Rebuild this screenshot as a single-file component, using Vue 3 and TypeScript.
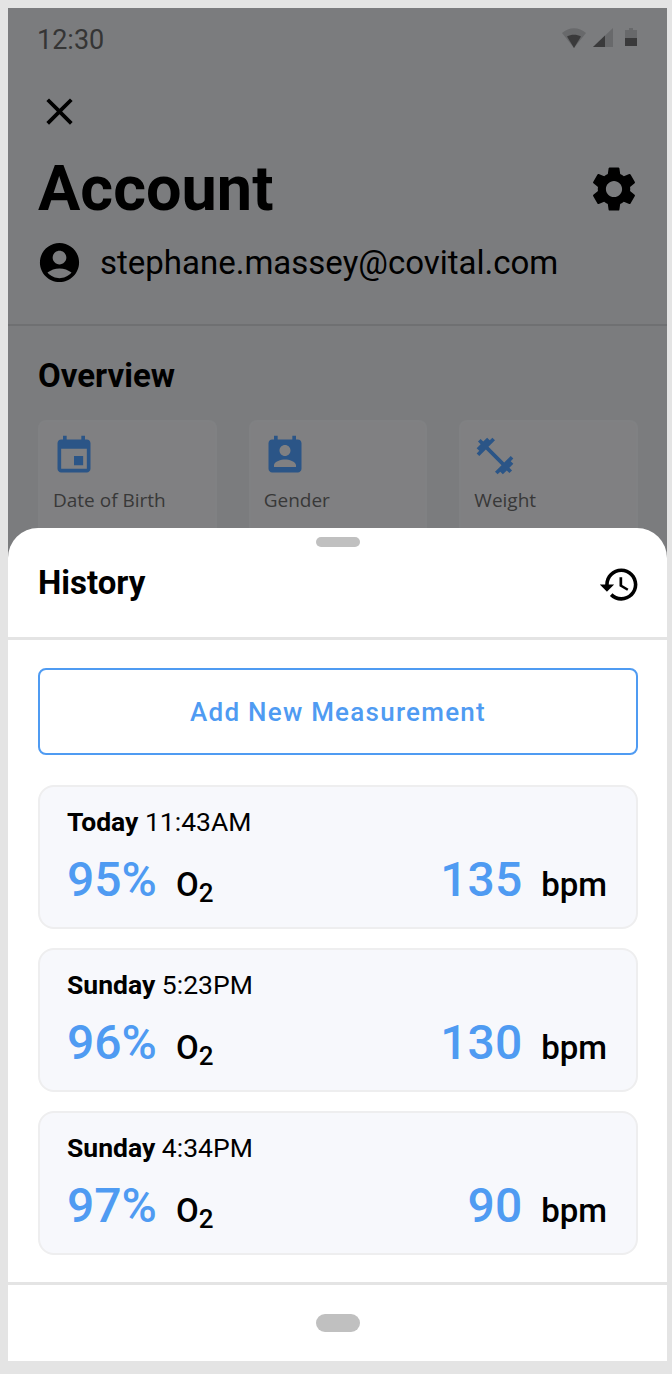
<script setup lang="ts">
interface Measurement {
  day: string
  time: string
  oxygen: number
  bpm: number
}

const overview = [
  { label: 'Date of Birth', path: 'M17 12h-5v5h5v-5zM16 1v2H8V1H6v2H5c-1.11 0-1.99.9-1.99 2L3 19c0 1.1.89 2 2 2h14c1.1 0 2-.9 2-2V5c0-1.1-.9-2-2-2h-1V1h-2zm3 18H5V8h14v11z' },
  { label: 'Gender', path: 'M19 3h-1V1h-2v2H8V1H6v2H5c-1.11 0-2 .9-2 2v14c0 1.1.89 2 2 2h14c1.1 0 2-.9 2-2V5c0-1.1-.9-2-2-2zm-7 3c1.66 0 3 1.34 3 3s-1.34 3-3 3-3-1.34-3-3 1.34-3 3-3zm6 12H6v-1c0-2 4-3.1 6-3.1s6 1.1 6 3.1v1z' },
  { label: 'Weight', path: 'M20.57 14.86L22 13.43 20.57 12 17 15.57 8.43 7 12 3.43 10.57 2 9.14 3.43 7.71 2 5.57 4.14 4.14 2.71 2.71 4.14l1.43 1.43L2 7.71l1.43 1.43L2 10.57 3.43 12 7 8.43 15.57 17 12 20.57 13.43 22l1.43-1.43L16.29 22l2.14-2.14 1.43 1.43 1.43-1.43-1.43-1.43L22 16.29z' },
]

const measurements: Measurement[] = [
  { day: 'Today', time: '11:43AM', oxygen: 95, bpm: 135 },
  { day: 'Sunday', time: '5:23PM', oxygen: 96, bpm: 130 },
  { day: 'Sunday', time: '4:34PM', oxygen: 97, bpm: 90 },
]
</script>

<template>
  <div class="frame">
    <div class="phone">
      <div class="account">
        <div class="status">
          <span class="clock">12:30</span>
          <div class="status-icons">
            <svg width="24" height="20" viewBox="0 0 24 20">
              <path d="M12 20L0 5C7 -1.5 17 -1.5 24 5z" fill="#68696b" />
              <path d="M12 20L5 8.5C9 6 15 6 19 8.500z" fill="#3a3a3b" />
            </svg>
            <svg width="20" height="20" viewBox="0 0 20 20">
              <path d="M0 19L20 0V19z" fill="#68696b" />
              <path d="M0 19L12 7.600V19z" fill="#3a3a3b" />
            </svg>
            <svg class="battery" width="12" height="19" viewBox="0 0 12 19">
              <path d="M4 0H8V2H12V10H0V2H4z" fill="#68696b" />
              <rect y="10" width="12" height="8" fill="#3a3a3b" />
            </svg>
          </div>
        </div>
        <svg class="close" width="45" height="45" viewBox="0 0 24 24">
          <path d="M19 6.41L17.59 5 12 10.59 6.41 5 5 6.41 10.59 12 5 17.59 6.41 19 12 13.41 17.59 19 19 17.59 13.41 12z" />
        </svg>
        <div class="title-row">
          <h1>Account</h1>
          <svg width="54" height="54" viewBox="0 0 24 24">
            <path d="M19.14 12.94c.04-.3.06-.61.06-.94 0-.32-.02-.64-.07-.94l2.03-1.58c.18-.14.23-.41.12-.61l-1.92-3.32c-.12-.22-.37-.29-.59-.22l-2.39.96c-.5-.38-1.03-.7-1.62-.94l-.36-2.54c-.04-.24-.24-.41-.48-.41h-3.84c-.24 0-.43.17-.47.41l-.36 2.54c-.59.24-1.13.57-1.62.94l-2.39-.96c-.22-.08-.47 0-.59.22L2.74 8.87c-.12.21-.08.47.12.61l2.03 1.58c-.05.3-.09.63-.09.94s.02.64.07.94l-2.03 1.58c-.18.14-.23.41-.12.61l1.92 3.32c.12.22.37.29.59.22l2.39-.96c.5.38 1.03.7 1.62.94l.36 2.54c.05.24.24.41.48.41h3.84c.24 0 .44-.17.47-.41l.36-2.54c.59-.24 1.13-.56 1.62-.94l2.39.96c.22.08.47 0 .59-.22l1.92-3.32c.12-.22.07-.47-.12-.61l-2.01-1.58zM12 15.6c-1.98 0-3.6-1.62-3.6-3.6s1.62-3.6 3.6-3.6 3.6 1.62 3.6 3.6-1.62 3.6-3.6 3.6z" />
          </svg>
        </div>
        <div class="email-row">
          <svg width="47" height="47" viewBox="0 0 24 24">
            <path d="M12 2C6.48 2 2 6.48 2 12s4.48 10 10 10 10-4.48 10-10S17.52 2 12 2zm0 4c1.93 0 3.5 1.57 3.5 3.5S13.93 13 12 13s-3.5-1.57-3.5-3.5S10.070 6 12 6zm0 14c-2.03 0-4.43-.82-6.14-2.88C7.55 15.8 9.68 15 12 15s4.45.8 6.14 2.12C16.43 19.18 14.03 20 12 20z" />
          </svg>
          <span>stephane.massey@covital.com</span>
        </div>
        <div class="overview">
          <h2>Overview</h2>
          <div class="overview-cards">
            <div v-for="item in overview" :key="item.label" class="overview-card">
              <svg width="44" height="44" viewBox="0 0 24 24">
                <path :d="item.path" />
              </svg>
              <span>{{ item.label }}</span>
            </div>
          </div>
        </div>
      </div>

      <div class="sheet">
        <div class="grip"></div>
        <div class="sheet-header">
          <h2>History</h2>
          <svg width="43" height="43" viewBox="0 0 24 24">
            <path d="M13 3c-4.97 0-9 4.03-9 9H1l3.89 3.89.07.14L9 12H6c0-3.87 3.13-7 7-7s7 3.13 7 7-3.13 7-7 7c-1.93 0-3.68-.79-4.94-2.06l-1.42 1.42C8.27 19.99 10.51 21 13 21c4.97 0 9-4.03 9-9s-4.03-9-9-9zm-1 5v5l4.28 2.54.72-1.21-3.5-2.08V8H12z" />
          </svg>
        </div>
        <div class="sheet-body">
          <button class="add-btn">Add New Measurement</button>
          <div v-for="m in measurements" :key="m.time" class="measure">
            <div class="when"><b>{{ m.day }}</b> {{ m.time }}</div>
            <div class="values">
              <div class="value">
                <strong>{{ m.oxygen }}%</strong>
                <span>O<sub>2</sub></span>
              </div>
              <div class="value">
                <strong>{{ m.bpm }}</strong>
                <span>bpm</span>
              </div>
            </div>
          </div>
        </div>
        <div class="sheet-footer">
          <div class="home-pill"></div>
        </div>
      </div>
    </div>
  </div>
</template>

<style>
html, body {
  background: #e4e4e4;
}
</style>

<style scoped>
.frame {
  width: 672px;
  height: 1374px;
  padding: 8px 5px 13px 8px;
  box-sizing: border-box;
  background: #e4e4e4;
  font-family: Roboto, sans-serif;
  color: #000;
}

.phone {
  position: relative;
  height: 100%;
  overflow: hidden;
  background: #7b7c7e;
}

.status {
  display: flex;
  justify-content: space-between;
  align-items: center;
  height: 63px;
  padding: 0 30px 0 29px;
}

.clock {
  font-size: 27px;
  color: #353535;
}

.status-icons {
  display: flex;
  align-items: center;
  gap: 7px;
  margin-top: -4px;
}

.battery {
  margin-left: 5px;
}

.close {
  display: block;
  margin: 18px 0 0 29px;
}

.title-row {
  display: flex;
  justify-content: space-between;
  align-items: center;
  padding: 17px 26px 0 30px;
}

h1 {
  margin: 0;
  font-size: 63px;
  line-height: 75px;
  font-weight: 700;
}

.email-row {
  display: flex;
  align-items: center;
  gap: 17px;
  margin-top: 13px;
  padding-left: 28px;
  font-size: 33px;
}

.overview {
  margin-top: 38px;
  padding: 31px 29px 0 30px;
  border-top: 2px solid #6f7072;
}

h2 {
  margin: 0;
  font-size: 33px;
  line-height: 38px;
  font-weight: 700;
}

.overview-cards {
  display: flex;
  gap: 32px;
  margin-top: 25px;
}

.overview-card {
  flex: 1;
  height: 160px;
  padding: 12px 13px;
  box-sizing: border-box;
  border: 2px solid #808183;
  border-radius: 8px;
  background: #808082;
  font-family: "Open Sans", sans-serif;
  font-size: 19px;
  color: #383838;
}

.overview-card svg {
  display: block;
  margin: 0 0 9px -1px;
  fill: #2b5587;
}

.sheet {
  position: absolute;
  left: 0;
  right: 0;
  bottom: 0;
  height: 833px;
  border-radius: 30px 30px 0 0;
  background: #fff;
}

.grip {
  width: 44px;
  height: 10px;
  margin: 9px auto 0;
  border-radius: 5px;
  background: #c0c0c0;
}

.sheet-header {
  display: flex;
  justify-content: space-between;
  align-items: center;
  height: 90px;
  padding: 0 26px 0 30px;
  border-bottom: 3px solid #e4e4e4;
}

.sheet-header svg {
  margin-top: -16px;
}

.sheet-header h2 {
  margin-top: -18px;
}

.sheet-body {
  display: flex;
  flex-direction: column;
  gap: 19px;
  height: 645px;
  padding: 28px 29px 0 30px;
  box-sizing: border-box;
  border-bottom: 3px solid #e4e4e4;
}

.add-btn {
  height: 87px;
  margin-bottom: 11px;
  border: 2px solid #4f9bf2;
  border-radius: 8px;
  background: #fff;
  color: #4f9bf2;
  font-family: Roboto, sans-serif;
  font-size: 26px;
  font-weight: 500;
  letter-spacing: 1.25px;
}

.measure {
  height: 144px;
  padding: 20px 29px 0 27px;
  box-sizing: border-box;
  border: 2px solid #eeeeef;
  border-radius: 16px;
  background: #f7f8fc;
}

.when {
  font-size: 26.5px;
  line-height: 30px;
}

.values {
  display: flex;
  justify-content: space-between;
  margin-top: 14px;
}

.value {
  display: flex;
  align-items: baseline;
  gap: 19px;
}

.value strong {
  font-size: 48px;
  line-height: 58px;
  font-weight: 500;
  color: #4f9bf2;
}

.value span {
  font-size: 33px;
  font-weight: 500;
}

.value sub {
  font-size: 26px;
  line-height: 0;
  vertical-align: -6px;
}

.sheet-footer {
  display: flex;
  justify-content: center;
  padding-top: 29px;
}

.home-pill {
  width: 44px;
  height: 18px;
  border-radius: 9px;
  background: #c0c0c0;
}
</style>
